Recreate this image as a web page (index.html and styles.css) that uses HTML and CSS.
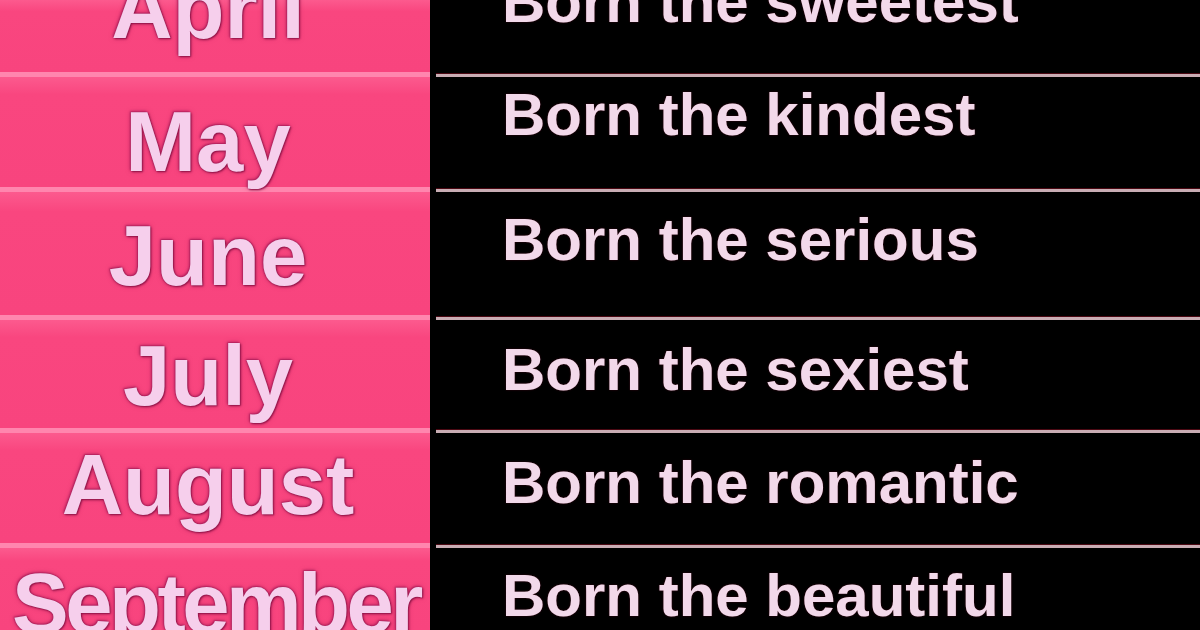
FILE: index.html
```html
<!DOCTYPE html>
<html lang="en">
<head>
<meta charset="utf-8">
<title>Born the...</title>
<link rel="stylesheet" href="styles.css">
</head>
<body>
<main class="chart">
  <div class="row row-apr">
    <div class="month"><span class="label">April</span></div>
    <div class="trait"><span class="label">Born the sweetest</span></div>
  </div>
  <div class="row row-may">
    <div class="month"><span class="label">May</span></div>
    <div class="trait"><span class="label">Born the kindest</span></div>
  </div>
  <div class="row row-jun">
    <div class="month"><span class="label">June</span></div>
    <div class="trait"><span class="label">Born the serious</span></div>
  </div>
  <div class="row row-jul">
    <div class="month"><span class="label">July</span></div>
    <div class="trait"><span class="label">Born the sexiest</span></div>
  </div>
  <div class="row row-aug">
    <div class="month"><span class="label">August</span></div>
    <div class="trait"><span class="label">Born the romantic</span></div>
  </div>
  <div class="row row-sep">
    <div class="month"><span class="label month-long">September</span></div>
    <div class="trait"><span class="label">Born the beautiful</span></div>
  </div>
</main>
</body>
</html>
```

FILE: styles.css
```css
html, body {
  margin: 0;
  padding: 0;
  width: 1200px;
  height: 630px;
  overflow: hidden;
  background: #000;
}

.chart {
  display: grid;
  grid-template-rows: 77px 115px 128px 113px 115px 1fr;
  height: 630px;
}

.row {
  display: grid;
  grid-template-columns: 430px 1fr;
  column-gap: 6px;
  min-height: 0;
}

.month {
  background: linear-gradient(#fc5a8e 0, #f9467f 16%, #f8447e 100%);
  border-bottom: 5px solid #ff86ae;
  text-align: center;
  padding-right: 14px;
  min-height: 0;
}

.month .label {
  display: block;
  margin-top: var(--mt);
  font-family: "Liberation Sans", Arial, sans-serif;
  font-weight: bold;
  font-size: 85px;
  line-height: 85px;
  color: #f6cfec;
  white-space: nowrap;
  text-shadow:
    0 0 1px #9c1a55,
    1px 1px 2px #8d1246,
    -1px -1px 2px #b72462,
    0 0 5px rgba(140, 20, 70, 0.55);
}

.month .month-long {
  letter-spacing: -3.5px;
  margin-right: -16px;
}

.trait {
  background: #000;
  border-bottom: 3px solid #c9adb4;
  box-shadow: inset 0 -1px 0 #4a0812;
  padding-left: 66px;
  min-height: 0;
}

.trait .label {
  display: block;
  margin-top: var(--tt);
  font-family: "Liberation Sans", Arial, sans-serif;
  font-weight: bold;
  font-size: 60px;
  line-height: 60px;
  color: #f2d9ea;
  white-space: nowrap;
  text-shadow: 0 0 2px #3d0614;
}

.row-apr { --mt: -34px; --tt: -28px; }
.row-may { --mt: 22px;  --tt: 8px; }
.row-jun { --mt: 21px;  --tt: 18px; }
.row-jul { --mt: 13px;  --tt: 20px; }
.row-aug { --mt: 9px;   --tt: 20px; }
.row-sep { --mt: 13px;  --tt: 18px; }

.row-sep .month,
.row-sep .trait {
  border-bottom: 0;
  box-shadow: none;
}
```
